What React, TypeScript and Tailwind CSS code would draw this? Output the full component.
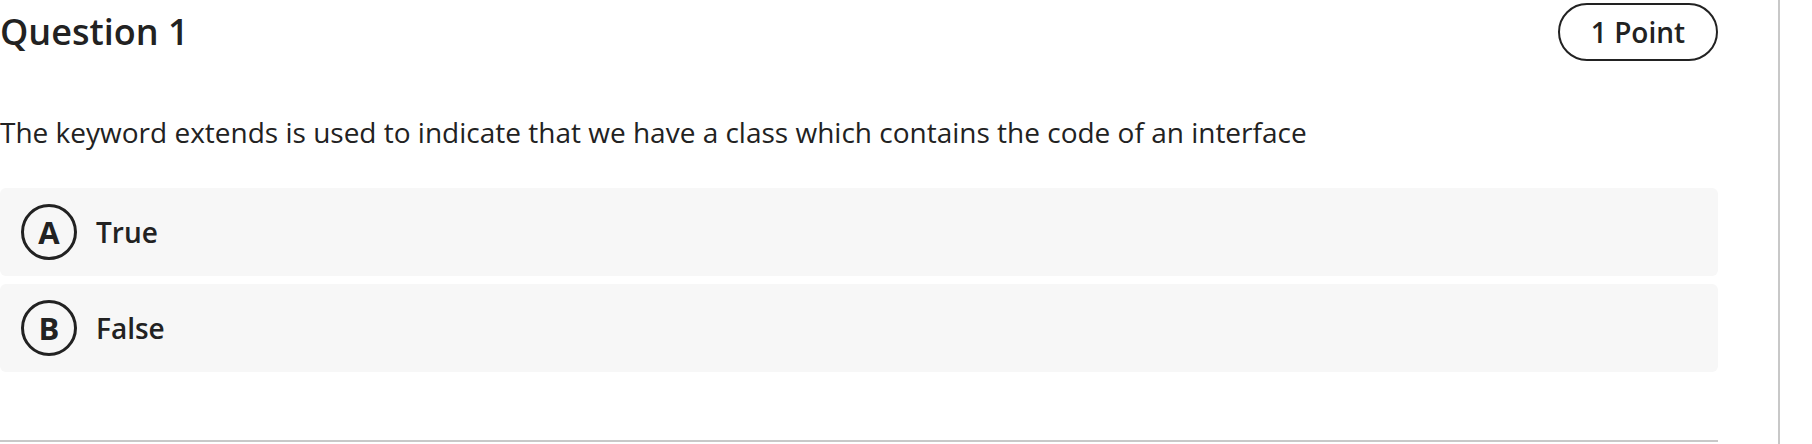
import React from "react";

const options = [
  { letter: "A", label: "True" },
  { letter: "B", label: "False" },
];

export default function App() {
  return (
    <div className="flex h-[444px] w-[1812px] bg-white font-['Open_Sans',sans-serif] text-[#222]">
      <div className="w-[1780px] border-r-2 border-[#c8c8c8] pr-[60px]">
        <div className="h-[442px] w-[1718px] border-b-2 border-[#c8c8c8]">
          <div className="flex h-[64px] items-center justify-between">
            <h1 className="text-[36px] font-semibold leading-[48px]">Question 1</h1>
            <span className="flex h-[58px] w-[160px] items-center justify-center rounded-full border-2 border-[#222] text-[28px] font-semibold leading-none">
              1 Point
            </span>
          </div>
          <p className="mt-[47px] text-[28px] leading-[42px]">
            The keyword extends is used to indicate that we have a class which contains the code of an interface
          </p>
          <div className="mt-[35px] flex flex-col gap-[8px]">
            {options.map((opt) => (
              <div
                key={opt.letter}
                className="flex h-[88px] items-center gap-[19px] rounded-[6px] bg-[#f7f7f7] px-[21px]"
              >
                <span className="flex h-[56px] w-[56px] items-center justify-center rounded-full border-[3px] border-[#222] text-[31px] font-bold leading-none">
                  {opt.letter}
                </span>
                <span className="text-[28px] font-semibold">{opt.label}</span>
              </div>
            ))}
          </div>
        </div>
      </div>
    </div>
  );
}
